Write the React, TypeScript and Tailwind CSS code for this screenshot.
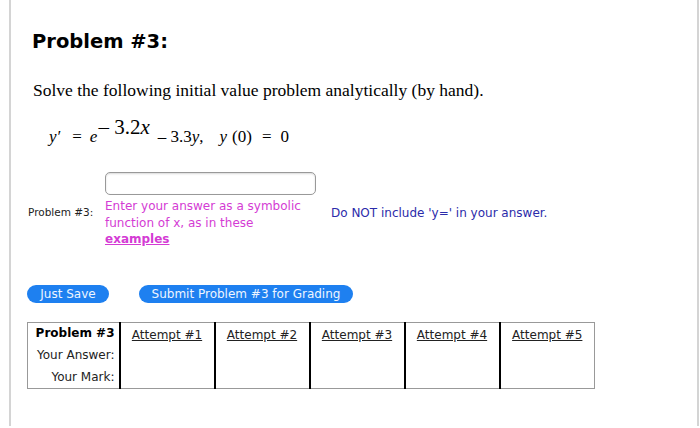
const attempts = ['Attempt #1', 'Attempt #2', 'Attempt #3', 'Attempt #4', 'Attempt #5'];

export default function App() {
    return (
        <div className="w-[700px] h-[428px] bg-white overflow-hidden font-['DejaVu_Sans',Verdana,sans-serif]">
            <div className="ml-[9px] w-[690px] h-[426px] border-l-2 border-r-2 border-[#d4d4d4] pl-[21px] pt-[30px]">
                {/* Title */}
                <h1 className="text-[19.5px] font-bold text-black leading-[24px]">Problem #3:</h1>

                {/* Statement */}
                <p className="mt-[25px] text-[17.5px] leading-[22px] text-black ml-[1px] font-['Liberation_Serif',serif]">
                    Solve the following initial value problem analytically (by hand).
                </p>

                {/* Equation */}
                <div className="mt-[14px] ml-[17px] flex items-end h-[34px] text-[17px] text-black font-['Liberation_Serif',serif]">
                    <span className="italic">y′</span>
                    <span className="ml-[12px]">=</span>
                    <span className="ml-[8px] italic">e</span>
                    <span className="self-start text-[21px] leading-[24px] ml-[1px]">
                        – 3.2<span className="italic">x</span>
                    </span>
                    <span className="ml-[8px]">
                        – 3.3<span className="italic">y</span>,
                    </span>
                    <span className="ml-[16px] italic">y</span>
                    <span className="ml-[5px]">(0)</span>
                    <span className="ml-[10px]">=</span>
                    <span className="ml-[9px]">0</span>
                </div>

                {/* Answer area */}
                <div className="mt-[23px] flex items-start">
                    <div className="w-[76px] pt-[33px] text-[10.5px] text-[#222] -ml-[4px]">Problem #3:</div>
                    <div className="w-[226px] ml-[1px]">
                        <div className="w-[211px] h-[23px] rounded-[5px] border border-[#999] bg-white shadow-[inset_0_1px_2px_rgba(0,0,0,0.15)]" />
                        <div className="w-[200px] mt-[3px] text-[12px] leading-[16.5px] text-[#d43bd4]">
                            Enter your answer as a symbolic function of x, as in these{' '}
                            <a className="font-bold underline">examples</a>
                        </div>
                    </div>
                    <div className="pt-[32px] text-[12px] text-[#2b2baa]">Do NOT include 'y=' in your answer.</div>
                </div>

                {/* Buttons */}
                <div className="mt-[37px] flex items-center -ml-[5px] text-[12px]">
                    <button className="w-[82px] h-[18px] rounded-full bg-[#1e80f0] text-[#eef5ff] leading-[18px]">Just Save</button>
                    <button className="ml-[30px] w-[214px] h-[18px] rounded-full bg-[#1e80f0] text-[#eef5ff] leading-[18px]">
                        Submit Problem #3 for Grading
                    </button>
                </div>

                {/* Attempts table */}
                <table className="mt-[19px] -ml-[5px] border-collapse border border-[#999] text-[12px] text-[#222]">
                    <tbody>
                        <tr>
                            <th className="w-[92px] h-[22px] pr-[4px] text-right font-bold border-r-2 border-black text-black">Problem #3</th>
                            {attempts.map((a, i) => (
                                <td
                                    key={a}
                                    rowSpan={3}
                                    className={`w-[95px] align-top text-center pt-[3px] ${i < 4 ? 'border-r-2 border-black' : ''}`}
                                >
                                    <a className="underline">{a}</a>
                                </td>
                            ))}
                        </tr>
                        <tr>
                            <td className="h-[22px] pr-[4px] text-right border-r-2 border-black">Your Answer:</td>
                        </tr>
                        <tr>
                            <td className="h-[22px] pr-[4px] text-right border-r-2 border-black">Your Mark:</td>
                        </tr>
                    </tbody>
                </table>
            </div>
        </div>
    );
}
